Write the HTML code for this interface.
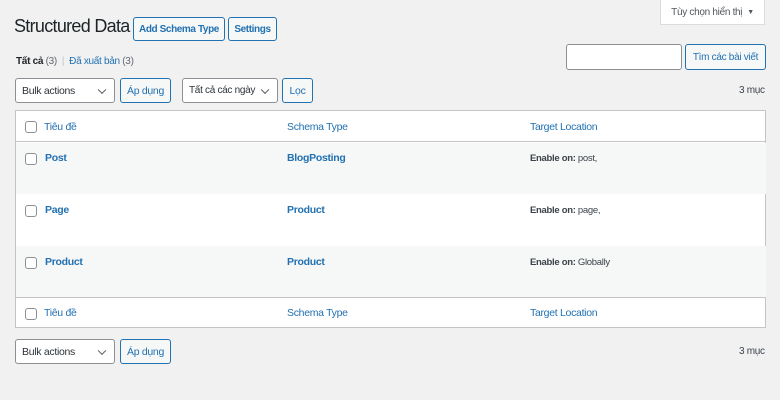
<!DOCTYPE html>
<html><head><meta charset="utf-8"><style>
*{box-sizing:border-box;margin:0;padding:0}
body{width:780px;height:400px;background:#f1f1f1;font-family:"Liberation Sans",sans-serif;font-size:10.5px;letter-spacing:-0.3px;color:#3c434a;position:relative;overflow:hidden;white-space:nowrap}
.a{position:absolute}
.btn{position:absolute;border:1px solid #2271b1;color:#2271b1;background:#f6f7f7;border-radius:3px;font-size:10.5px;display:flex;align-items:center;justify-content:center}
.sel{position:absolute;border:1px solid #8c8f94;background:#fff;border-radius:3px;font-size:10.5px;color:#2c3338;padding-left:6px;display:flex;align-items:center}
.sel:after{content:"";position:absolute;right:9px;top:50%;width:5px;height:5px;border-right:1.3px solid #555;border-bottom:1.3px solid #555;transform:translateY(-70%) rotate(45deg)}
.cb{position:absolute;left:9px;width:12px;height:12px;border:1px solid #8c8f94;border-radius:3px;background:#fff}
.row{position:absolute;left:0;width:750px}
.l{color:#2271b1}
.b{font-weight:bold}
</style></head><body>
<div class="a" style="left:14px;top:16px;font-size:18px;letter-spacing:-0.7px;color:#1d2327">Structured Data</div>
<div class="btn b" style="left:133px;top:17px;width:92px;height:24px;font-size:10px;letter-spacing:-0.4px">Add Schema Type</div>
<div class="btn b" style="left:228px;top:17px;width:49px;height:24px;font-size:10px;letter-spacing:-0.4px">Settings</div>
<div class="a" style="left:660px;top:0;width:105px;height:25px;background:#fff;border:1px solid #dcdcde;border-top:none;font-size:10px;color:#50575e;display:flex;align-items:center;justify-content:center">Tùy chọn hiển thị &nbsp;<span style="font-size:7px">▼</span></div>
<div class="a" style="left:16px;top:56px;font-size:10px"><b style="color:#1d2327">Tất cả</b> <span style="color:#646970">(3)</span> <span style="color:#c3c4c7">&nbsp;|&nbsp;</span> <span class="l">Đã xuất bản</span> <span style="color:#646970">(3)</span></div>
<div class="a" style="left:566px;top:44px;width:116px;height:26px;background:#fff;border:1px solid #8c8f94;border-radius:3px"></div>
<div class="btn" style="left:685px;top:44px;width:81px;height:26px;font-size:10px">Tìm các bài viết</div>
<div class="sel" style="left:15px;top:78px;width:100px;height:25px">Bulk actions</div>
<div class="btn" style="left:120px;top:78px;width:51px;height:25px">Áp dụng</div>
<div class="sel" style="left:182px;top:78px;width:96px;height:25px;font-size:10px">Tất cả các ngày</div>
<div class="btn" style="left:282px;top:78px;width:31px;height:25px">Lọc</div>
<div class="a" style="left:739px;top:85px;font-size:10px">3 mục</div>
<div class="a" style="left:15px;top:110px;width:751px;height:218px;background:#fff;border:1px solid #c3c4c7">
 <div class="row" style="top:0;height:31px;border-bottom:1px solid #c3c4c7"><div class="cb" style="top:10px"></div><span class="a l" style="left:28px;top:10px">Tiêu đề</span><span class="a l" style="left:271px;top:10px">Schema Type</span><span class="a l" style="left:514px;top:10px">Target Location</span></div>
 <div class="row" style="top:32px;height:51px;background:#f6f7f7"><div class="cb" style="top:10px"></div><span class="a l b" style="left:29px;top:9px">Post</span><span class="a l b" style="left:271px;top:9px">BlogPosting</span><span class="a" style="left:514px;top:10px;font-size:9.5px"><b>Enable on:</b> post,</span></div>
 <div class="row" style="top:83px;height:52px"><div class="cb" style="top:11px"></div><span class="a l b" style="left:29px;top:10px">Page</span><span class="a l b" style="left:271px;top:10px">Product</span><span class="a" style="left:514px;top:11px;font-size:9.5px"><b>Enable on:</b> page,</span></div>
 <div class="row" style="top:135px;height:51px;background:#f6f7f7"><div class="cb" style="top:11px"></div><span class="a l b" style="left:29px;top:10px">Product</span><span class="a l b" style="left:271px;top:10px">Product</span><span class="a" style="left:514px;top:11px;font-size:9.5px"><b>Enable on:</b> Globally</span></div>
 <div class="row" style="top:186px;height:30px;border-top:1px solid #c3c4c7"><div class="cb" style="top:10px"></div><span class="a l" style="left:28px;top:9px">Tiêu đề</span><span class="a l" style="left:271px;top:9px">Schema Type</span><span class="a l" style="left:514px;top:9px">Target Location</span></div>
</div>
<div class="sel" style="left:15px;top:339px;width:100px;height:25px">Bulk actions</div>
<div class="btn" style="left:120px;top:339px;width:51px;height:25px">Áp dụng</div>
<div class="a" style="left:739px;top:346px;font-size:10px">3 mục</div>
</body></html>
